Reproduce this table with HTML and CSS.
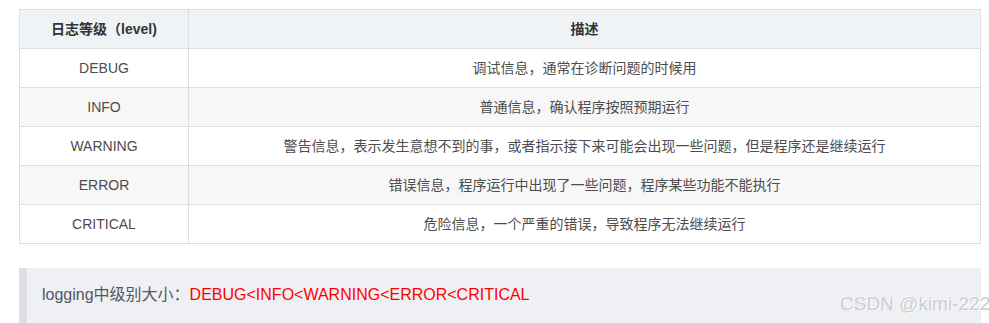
FILE: index.html
```html
<!DOCTYPE html>
<html lang="zh">
<head>
<meta charset="utf-8">
<link rel="stylesheet" href="styles.css">
</head>
<body>
<div class="page">
  <table class="levels">
    <thead>
      <tr><th class="c1">日志等级（level)</th><th>描述</th></tr>
    </thead>
    <tbody>
      <tr><td>DEBUG</td><td>调试信息，通常在诊断问题的时候用</td></tr>
      <tr class="alt"><td>INFO</td><td>普通信息，确认程序按照预期运行</td></tr>
      <tr><td>WARNING</td><td>警告信息，表示发生意想不到的事，或者指示接下来可能会出现一些问题，但是程序还是继续运行</td></tr>
      <tr class="alt"><td>ERROR</td><td>错误信息，程序运行中出现了一些问题，程序某些功能不能执行</td></tr>
      <tr><td>CRITICAL</td><td>危险信息，一个严重的错误，导致程序无法继续运行</td></tr>
    </tbody>
  </table>
  <blockquote class="note">
    <p>logging中级别大小：<span class="red">DEBUG&lt;INFO&lt;WARNING&lt;ERROR&lt;CRITICAL</span></p>
  </blockquote>
</div>
<div class="wm">CSDN @kimi-222</div>
</body>
</html>
```
FILE: styles.css
```css
html, body {
  margin: 0;
  padding: 0;
  background: #fff;
  overflow: hidden;
}
body {
  font-family: "Liberation Sans", "Noto Sans CJK SC", sans-serif;
  position: relative;
  width: 989px;
  height: 323px;
}
.page {
  padding: 9px 8px 0 19px;
}
.levels {
  width: 962px;
  border-collapse: collapse;
  font-size: 14px;
  color: #4d4d4d;
}
.levels th, .levels td {
  border: 1px solid #dddddd;
  padding: 8px 8px;
  line-height: 22px;
  text-align: center;
  font-weight: normal;
}
.levels th {
  background: #eff3f5;
  color: #333;
  font-weight: bold;
}
.levels th.c1 {
  width: 152px;
}
.levels tr.alt td {
  background: #f7f7f7;
}
.note {
  margin: 24px 0 0 0;
  width: 962px;
  box-sizing: border-box;
  background: #eef0f4;
  border-left: 8px solid #dddfe4;
  padding: 16px 15px 20px;
}
.note p {
  margin: 0;
  font-size: 16px;
  line-height: 22px;
  color: #555666;
}
.red {
  color: #ff0000;
}
.wm {
  position: absolute;
  left: 840px;
  top: 294px;
  font-size: 19px;
  line-height: 20px;
  color: #cfcfcf;
  white-space: nowrap;
  text-shadow: 1px 1px 0 rgba(255,255,255,0.9), -1px -1px 0 rgba(255,255,255,0.6), 0 1px 1px rgba(0,0,0,0.12);
}
```
